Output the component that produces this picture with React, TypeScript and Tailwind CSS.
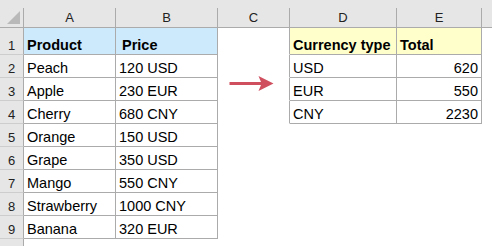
import React from "react";

const products = [
  ["Peach", "120 USD"],
  ["Apple", "230 EUR"],
  ["Cherry", "680 CNY"],
  ["Orange", "150 USD"],
  ["Grape", "350 USD"],
  ["Mango", "550 CNY"],
  ["Strawberry", "1000 CNY"],
  ["Banana", "320 EUR"],
];

const totals = [
  ["USD", "620"],
  ["EUR", "550"],
  ["CNY", "2230"],
];

const line = "border-[#ababab]";

function RowHead({ n }: { n: number }) {
  return (
    <div className="flex items-end justify-center bg-[#e6e6e6] border-r border-b border-r-[#ababab] border-b-[#cdcdcd] text-[13px] leading-[17px] text-[#222]">
      {n}
    </div>
  );
}

function Cell({
  children,
  cls = "",
  border = true,
}: {
  children?: React.ReactNode;
  cls?: string;
  border?: boolean;
}) {
  return (
    <div
      className={`flex items-end px-[3px] text-[14.5px] leading-[17px] text-black whitespace-nowrap overflow-hidden ${
        border ? `border-r border-b ${line}` : "border-r border-b border-transparent"
      } ${cls}`}
    >
      {children}
    </div>
  );
}

export default function App() {
  return (
    <div className="relative w-[492px] h-[246px] bg-white overflow-hidden" style={{ fontFamily: '"Liberation Sans", Arial, sans-serif' }}>
      <div className="h-[8px] bg-[#e6e6e6]" />
      <div className="grid grid-cols-[24px_92px_102px_72px_107px_85px_1fr] grid-rows-[20px_27px_repeat(8,23px)_8px]">
        {/* column headers */}
        <div className={`relative bg-[#e6e6e6] border-r border-b ${line}`}>
          <div className="absolute right-[3px] bottom-[3px] w-0 h-0 border-l-[13px] border-l-transparent border-b-[13px] border-b-[#b9b9b9]" />
        </div>
        {["A", "B", "C", "D", "E"].map((c) => (
          <div key={c} className={`flex items-center justify-center bg-[#e6e6e6] border-r border-b ${line} text-[13px] text-[#222]`}>
            {c}
          </div>
        ))}
        <div className={`bg-[#e6e6e6] border-b ${line}`} />

        {/* row 1 */}
        <RowHead n={1} />
        <Cell cls="bg-[#cceafc] font-bold">Product</Cell>
        <Cell cls="bg-[#cceafc] font-bold pl-[6px]">Price</Cell>
        <Cell border={false} cls="border-r-[#ababab]" />
        <Cell cls="bg-[#ffffcc] font-bold">Currency type</Cell>
        <Cell cls="bg-[#ffffcc] font-bold">Total</Cell>
        <div />

        {products.map(([p, price], i) => {
          const t = totals[i];
          return (
            <React.Fragment key={p}>
              <RowHead n={i + 2} />
              <Cell>{p}</Cell>
              <Cell>{price}</Cell>
              <Cell border={false} cls={t ? "border-r-[#ababab]" : ""} />
              {t ? <Cell>{t[0]}</Cell> : <Cell border={false} />}
              {t ? <Cell cls="justify-end">{t[1]}</Cell> : <Cell border={false} />}
              <div />
            </React.Fragment>
          );
        })}

        {/* row 10 */}
        <div className="bg-[#e6e6e6] border-r border-[#ababab]" />
        <div />
        <div />
        <div />
        <div />
        <div />
        <div />
      </div>

      <svg className="absolute left-0 top-0" width="492" height="246" viewBox="0 0 492 246">
        <path d="M229.5 82 L261 82 L258.5 76 L273.5 83.5 L258.5 91 L261 85 L229.5 85 Z" fill="#cf4f5f" />
      </svg>
    </div>
  );
}
